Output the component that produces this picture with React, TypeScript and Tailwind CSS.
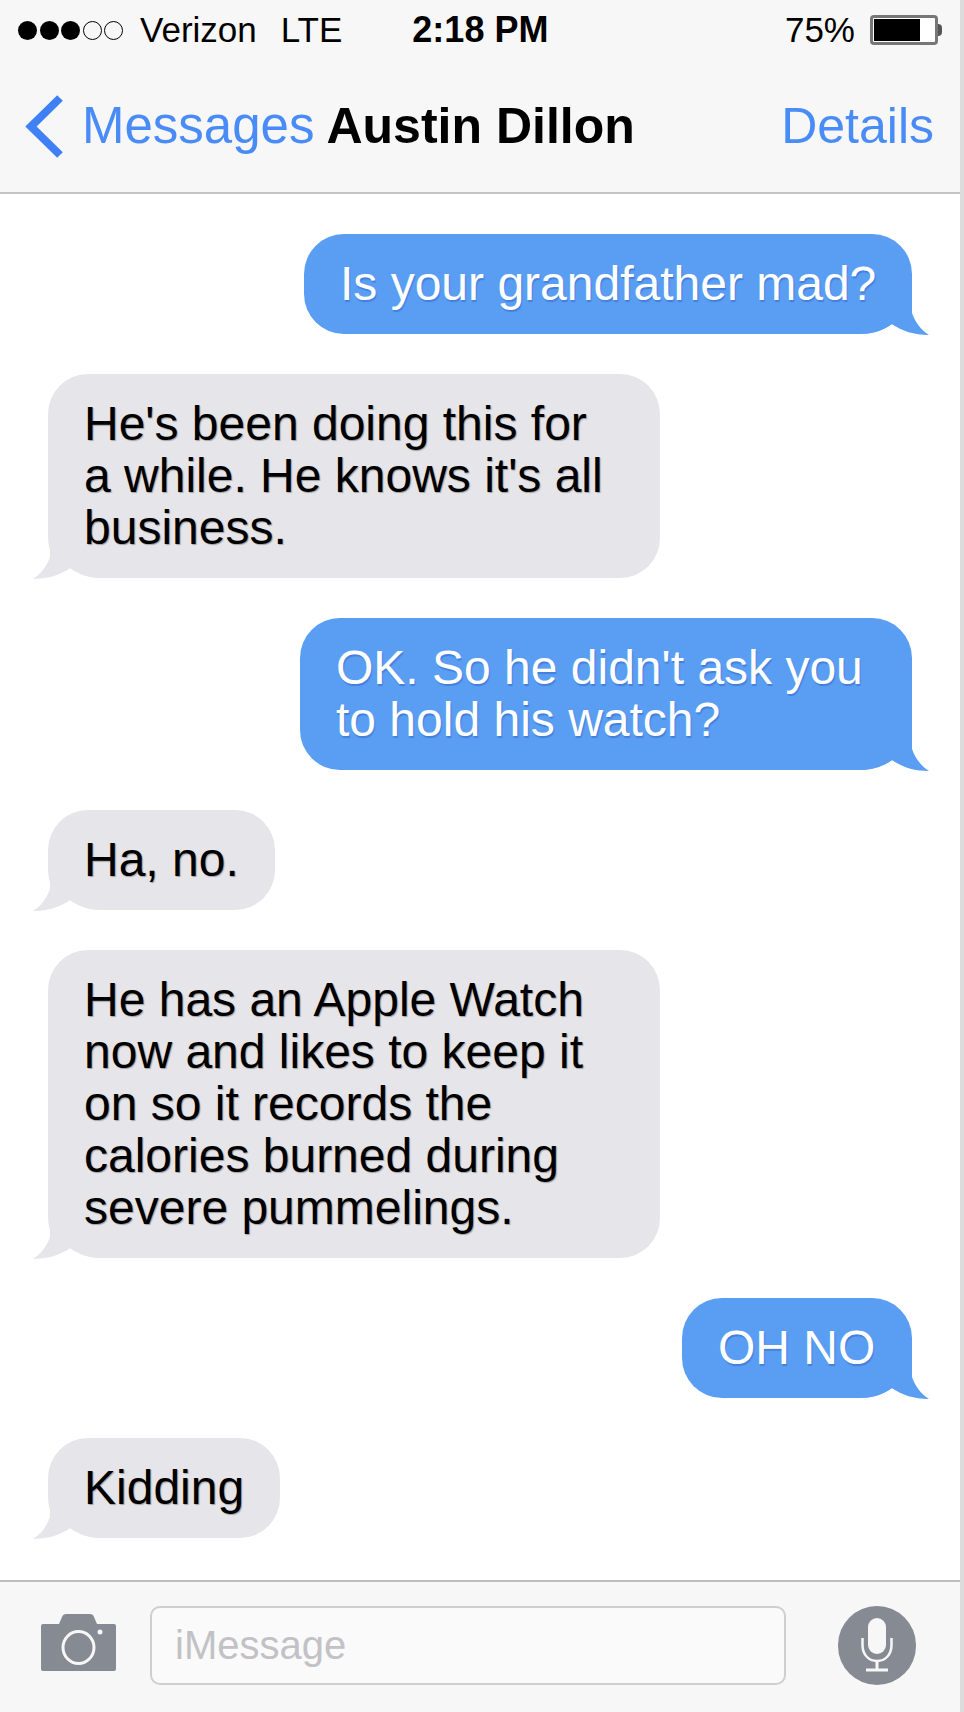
const font = "font-['Liberation_Sans',Arial,sans-serif]";

const messages = [
  { me: true, width: 'w-[608px]', lines: ['Is your grandfather mad?'] },
  { me: false, width: 'w-[612px]', lines: ["He's been doing this for", "a while. He knows it's all", 'business.'] },
  { me: true, width: 'w-[612px]', lines: ["OK. So he didn't ask you", 'to hold his watch?'] },
  { me: false, width: 'w-[227px]', lines: ['Ha, no.'] },
  {
    me: false,
    width: 'w-[612px]',
    lines: ['He has an Apple Watch', 'now and likes to keep it', 'on so it records the', 'calories burned during', 'severe pummelings.'],
  },
  { me: true, width: 'w-[230px]', lines: ['OH NO'] },
  { me: false, width: 'w-[232px]', lines: ['Kidding'] },
];

const Tail = ({ me }: { me: boolean }) => (
  <svg
    width="72"
    height="46"
    viewBox="0 0 72 46"
    className={me ? 'absolute right-[-18px] bottom-[-6px]' : 'absolute left-[-16px] bottom-[-6px] -scale-x-100'}
  >
    {/* white patch hides the bubble's rounded corner under the notch */}
    <path d="M0 40 C14 40 24 37 34 30 C44 37 56 41 71 41 L71 46 L0 46 Z" fill="#ffffff" />
    <path d="M0 0 L54 0 L54 19 C57 28 63 36 71 41 C56 41 44 37 34 30 C24 37 14 40 0 40 Z" fill={me ? '#5a9ef4' : '#e5e5ea'} />
  </svg>
);

const Bubble = ({ me, width, lines }: { me: boolean; width: string; lines: string[] }) => (
  <div className={`relative ${width} rounded-[40px] py-[24px] ${me ? 'self-end bg-[#5a9ef4] px-[36px] text-white [text-shadow:1px_2px_1px_rgba(40,90,190,0.45)]' : 'self-start bg-[#e5e5ea] px-[36px] text-black [text-shadow:1px_1px_1px_rgba(0,0,0,0.3)]'}`}>
    {lines.map((line) => (
      <div key={line} className="relative z-10 whitespace-nowrap text-[48px] leading-[52px]">
        {line}
      </div>
    ))}
    <Tail me={me} />
  </div>
);

const Dots = () => (
  <div className="flex items-center gap-[2.5px]">
    <span className="h-[19px] w-[19px] rounded-full bg-black" />
    <span className="h-[19px] w-[19px] rounded-full bg-black" />
    <span className="h-[19px] w-[19px] rounded-full bg-black" />
    <span className="h-[19px] w-[19px] rounded-full border border-black" />
    <span className="h-[19px] w-[19px] rounded-full border border-black" />
  </div>
);

const Battery = () => (
  <div className="flex items-center">
    <div className="h-[30px] w-[68px] rounded-[4px] border-[3px] border-[#777] bg-white p-[1px]">
      <div className="h-full w-[77%] bg-black" />
    </div>
    <div className="h-[12px] w-[4px] rounded-r-full bg-[#555]" />
  </div>
);

const Camera = () => (
  <svg width="75" height="57" viewBox="0 0 75 57">
    <path
      fill="#868b93"
      fillRule="evenodd"
      d="M2 10 H18 L21 3 Q22 0 25 0 H49 Q52 0 53 3 L56 10 H73 Q75 10 75 12 V55 Q75 57 73 57 H2 Q0 57 0 55 V12 Q0 10 2 10 Z M37.5 16 A17 17.5 0 1 0 37.5 51 A17 17.5 0 1 0 37.5 16 Z M37.5 19 A14 14.5 0 1 1 37.5 48 A14 14.5 0 1 1 37.5 19 Z"
    />
    <circle cx="11" cy="6" r="3" fill="#f7f7f7" />
    <circle cx="59" cy="18" r="2.5" fill="#f7f7f7" />
  </svg>
);

const Mic = () => (
  <div className="flex h-[79px] w-[78px] items-center justify-center rounded-full bg-[#868b93]">
    <svg width="32" height="54" viewBox="0 0 32 54">
      <rect x="7" y="0" width="18" height="36" rx="9" fill="#f7f7f7" />
      <path d="M1.5 20 V27 C1.5 37 8 43 16 43 C24 43 30.5 37 30.5 27 V20" fill="none" stroke="#f7f7f7" strokeWidth="2.5" />
      <path d="M16 43 V51 M5 52 H27" fill="none" stroke="#f7f7f7" strokeWidth="3" />
    </svg>
  </div>
);

export default function App() {
  return (
    <div className={`flex h-[1712px] w-[964px] flex-col border-r-4 border-[#dcdcdc] bg-white ${font}`}>
      <header className="h-[194px] shrink-0 border-b-2 border-[#c4c4c8] bg-[#f7f7f7]">
        <div className="flex h-[60px] items-center justify-between pr-[18px] pl-[18px] text-[35px] text-black">
          <div className="flex items-center">
            <Dots />
            <span className="ml-[17px]">Verizon</span>
            <span className="ml-[24px]">LTE</span>
            <span className="ml-[70px] text-[36px] font-bold">2:18 PM</span>
          </div>
          <div className="flex items-center gap-[15px]">
            <span>75%</span>
            <Battery />
          </div>
        </div>
        <div className="flex items-center justify-between pt-[28px] pr-[26px] pl-[24px]">
          <div className="flex items-center">
            <svg width="40" height="63" viewBox="0 0 40 63">
              <path d="M36 3 L7 31.5 L36 60" fill="none" stroke="#4080f6" strokeWidth="8" />
            </svg>
            <span className="ml-[18px] text-[51px] text-[#4a8cf7]">Messages</span>
            <span className="ml-[12px] text-[50px] font-bold text-black">Austin Dillon</span>
          </div>
          <span className="text-[50px] text-[#4a8cf7]">Details</span>
        </div>
      </header>
      <main className="flex flex-1 flex-col gap-[40px] pt-[40px] pr-[48px] pl-[48px]">
        {messages.map((m) => (
          <Bubble key={m.lines[0]} me={m.me} width={m.width} lines={m.lines} />
        ))}
      </main>
      <footer className="flex h-[132px] shrink-0 items-center border-t-2 border-[#bcbcc2] bg-[#f7f7f7] pr-[44px] pb-[4px] pl-[41px]">
        <div className="mb-[6px]">
          <Camera />
        </div>
        <div className="ml-[34px] flex h-[79px] w-[636px] items-center rounded-[10px] border-2 border-[#cfcfd2] bg-[#fafafa] pl-[23px] text-[40px] text-[#c2c2c6]">
          iMessage
        </div>
        <div className="ml-auto">
          <Mic />
        </div>
      </footer>
    </div>
  );
}
